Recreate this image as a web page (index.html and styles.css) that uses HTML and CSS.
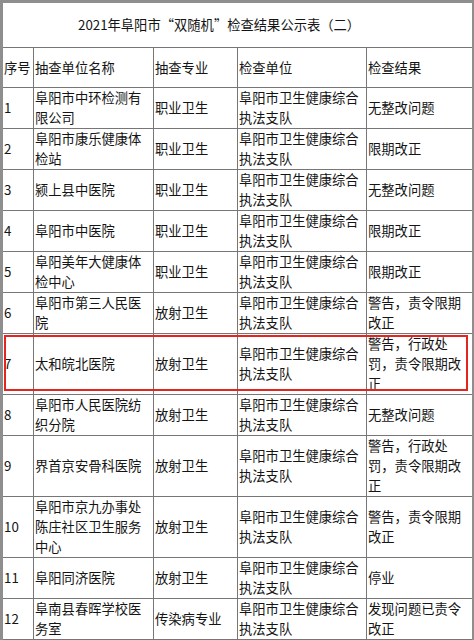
FILE: index.html
```html
<!DOCTYPE html>
<html lang="zh-CN">
<head>
<meta charset="utf-8">
<title>2021年阜阳市“双随机”检查结果公示表（二）</title>
<link rel="stylesheet" href="styles.css">
</head>
<body>
<div class="sheet">
  <table class="results">
    <colgroup>
      <col class="c-no">
      <col class="c-name">
      <col class="c-field">
      <col class="c-dept">
      <col class="c-result">
    </colgroup>
    <tbody>
      <tr class="title"><td colspan="5">2021年阜阳市“双随机”检查结果公示表（二）</td></tr>
      <tr class="head"><td>序号</td><td>抽查单位名称</td><td>抽查专业</td><td>检查单位</td><td>检查结果</td></tr>
      <tr><td>1</td><td>阜阳市中环检测有限公司</td><td>职业卫生</td><td>阜阳市卫生健康综合执法支队</td><td>无整改问题</td></tr>
      <tr><td>2</td><td>阜阳市康乐健康体检站</td><td>职业卫生</td><td>阜阳市卫生健康综合执法支队</td><td>限期改正</td></tr>
      <tr><td>3</td><td>颍上县中医院</td><td>职业卫生</td><td>阜阳市卫生健康综合执法支队</td><td>无整改问题</td></tr>
      <tr><td>4</td><td>阜阳市中医院</td><td>职业卫生</td><td>阜阳市卫生健康综合执法支队</td><td>限期改正</td></tr>
      <tr><td>5</td><td>阜阳美年大健康体检中心</td><td>职业卫生</td><td>阜阳市卫生健康综合执法支队</td><td>限期改正</td></tr>
      <tr><td>6</td><td>阜阳市第三人民医院</td><td>放射卫生</td><td>阜阳市卫生健康综合执法支队</td><td>警告，责令限期改正</td></tr>
      <tr class="flagged"><td>7<span class="flag-box"></span></td><td>太和皖北医院</td><td>放射卫生</td><td>阜阳市卫生健康综合执法支队</td><td>警告，行政处罚，责令限期改正</td></tr>
      <tr><td>8</td><td>阜阳市人民医院纺织分院</td><td>放射卫生</td><td>阜阳市卫生健康综合执法支队</td><td>无整改问题</td></tr>
      <tr><td>9</td><td>界首京安骨科医院</td><td>放射卫生</td><td>阜阳市卫生健康综合执法支队</td><td>警告，行政处罚，责令限期改正</td></tr>
      <tr><td>10</td><td>阜阳市京九办事处陈庄社区卫生服务中心</td><td>放射卫生</td><td>阜阳市卫生健康综合执法支队</td><td>警告，责令限期改正</td></tr>
      <tr><td>11</td><td>阜阳同济医院</td><td>放射卫生</td><td>阜阳市卫生健康综合执法支队</td><td>停业</td></tr>
      <tr><td>12</td><td>阜南县春晖学校医务室</td><td>传染病专业</td><td>阜阳市卫生健康综合执法支队</td><td>发现问题已责令改正</td></tr>
    </tbody>
  </table>
</div>
</body>
</html>
```

FILE: styles.css
```css
html, body {
  margin: 0;
  padding: 0;
  background: #ffffff;
}

body {
  font-family: "Noto Sans CJK SC", "Microsoft YaHei", sans-serif;
  font-size: 13.3px;
  color: #141414;
}

.sheet {
  position: relative;
  width: 474px;
  box-sizing: border-box;
  border-top: 3px solid #8e8e8e;
  border-left: 3px solid #8e8e8e;
  border-right: 2px solid #8e8e8e;
}

.results {
  width: 469px;
  table-layout: fixed;
  border-collapse: separate;
  border-spacing: 0;
}

.c-no { width: 31px; }
.c-name { width: 120px; }
.c-field { width: 84px; }
.c-dept { width: 129px; }
.c-result { width: 105px; }

.results td {
  box-sizing: border-box;
  padding: 0 0 0 1px;
  border-right: 1px solid #767676;
  border-bottom: 1px solid #767676;
  line-height: 20px;
  vertical-align: middle;
  text-align: left;
  word-break: normal;
}

.results td:last-child {
  border-right: 0;
}

.title td {
  height: 45px;
  padding-left: 75px;
  border-right: 0;
}

.head td {
  height: 40px;
}

.flagged {
  position: relative;
}

.flag-box {
  position: absolute;
  left: 1px;
  top: 1px;
  width: 464px;
  height: 56px;
  box-sizing: border-box;
  border: 2px solid #e3241f;
  pointer-events: none;
}
```
